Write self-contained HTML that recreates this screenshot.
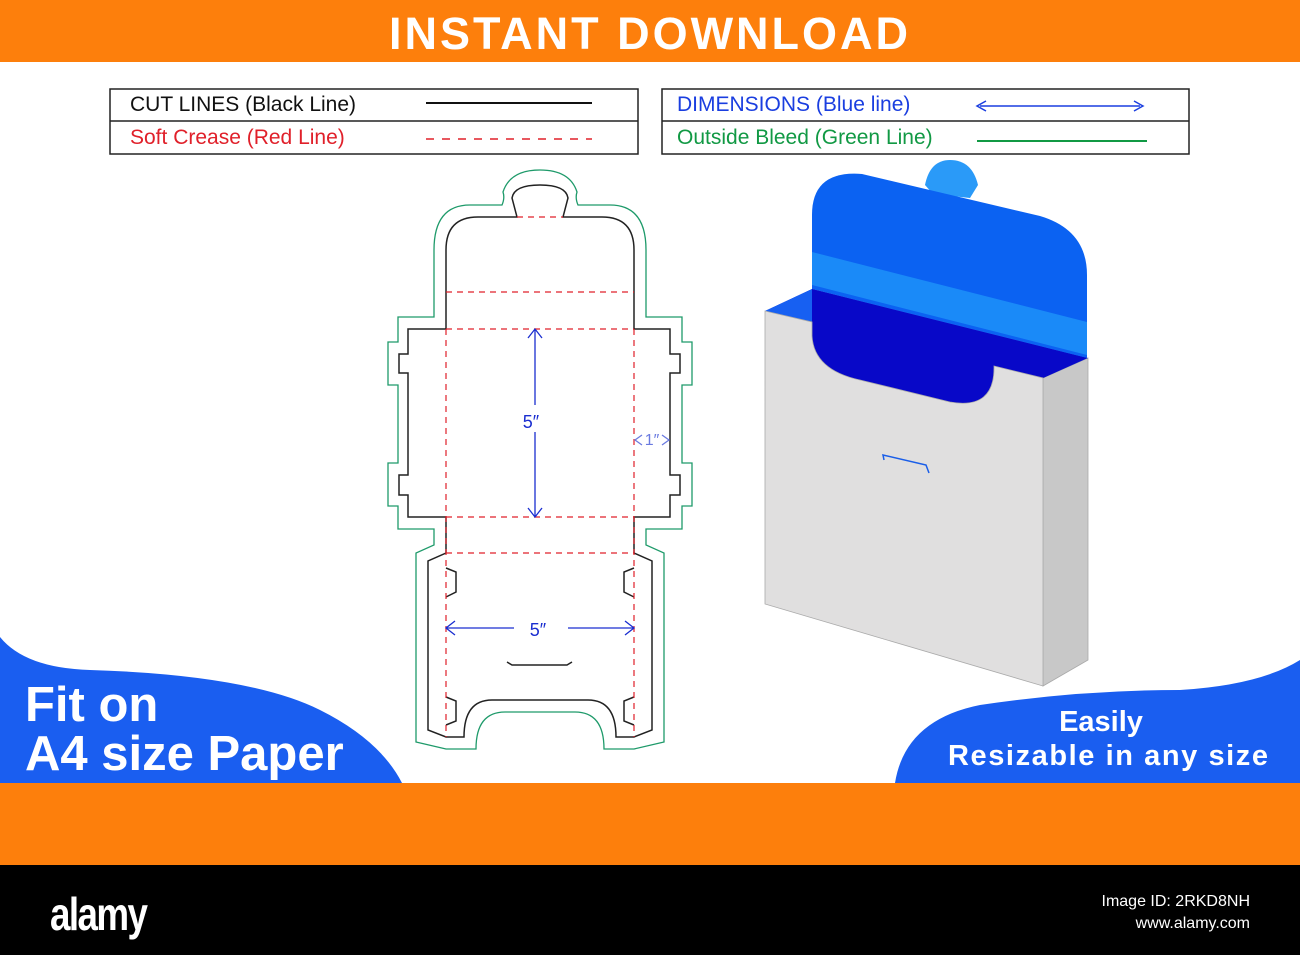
<!DOCTYPE html>
<html><head><meta charset="utf-8"><style>
html,body{margin:0;padding:0;width:1300px;height:955px;overflow:hidden;background:#fff}
svg{display:block}
text{font-family:"Liberation Sans",sans-serif}
</style></head><body>
<svg width="1300" height="955" viewBox="0 0 1300 955" xmlns="http://www.w3.org/2000/svg">
<rect width="1300" height="955" fill="#fff"/>
<rect x="0" y="0" width="1300" height="62" fill="#fd7f0c"/>
<text x="650" y="49" text-anchor="middle" font-size="45" font-weight="bold" fill="#fff" letter-spacing="3">INSTANT DOWNLOAD</text>
<g fill="none" stroke="#222" stroke-width="1.5">
<rect x="110" y="89" width="528" height="65"/><line x1="110" y1="121" x2="638" y2="121"/>
<rect x="662" y="89" width="527" height="65"/><line x1="662" y1="121" x2="1189" y2="121"/>
</g>
<text x="130" y="111" font-size="21" fill="#111">CUT LINES (Black Line)</text>
<line x1="426" y1="103" x2="592" y2="103" stroke="#111" stroke-width="2"/>
<text x="130" y="144" font-size="21" fill="#e0202a">Soft Crease (Red Line)</text>
<line x1="426" y1="139" x2="592" y2="139" stroke="#e0202a" stroke-width="1.5" stroke-dasharray="8,8"/>
<text x="677" y="111" font-size="21" fill="#1a3ee0">DIMENSIONS (Blue line)</text>
<line x1="980" y1="106" x2="1140" y2="106" stroke="#1a3ee0" stroke-width="1.5"/>
<path d="M986 101 L977 106 L986 111 M1134 101 L1143 106 L1134 111" fill="none" stroke="#1a3ee0" stroke-width="1.5"/>
<text x="677" y="144" font-size="21" fill="#119944">Outside Bleed (Green Line)</text>
<line x1="977" y1="141" x2="1147" y2="141" stroke="#119944" stroke-width="2"/>

<path d="M434 290 L434 250 Q434 205 470 205 L502 205 Q505 198 503 192 Q510 170 540 170 Q570 170 577 192 Q575 198 578 205 L610 205 Q646 205 646 250 L646 317 L682 317 L682 342 L692 342 L692 385 L682 385 L682 463 L692 463 L692 506 L682 506 L682 529 L646 529 L646 545 L664 553 L664 742 L634 749 L604 749 Q604 712 575 712 L505 712 Q476 712 476 749 L446 749 L416 742 L416 553 L434 545 L434 529 L398 529 L398 506 L388 506 L388 463 L398 463 L398 385 L388 385 L388 342 L398 342 L398 317 L434 317 Z" fill="none" stroke="#1e9a6a" stroke-width="1.3"/>
<path d="M446 329 L446 250 Q446 217 478 217 L517 217 L512 198 Q514 185 540 185 Q566 185 568 198 L563 217 L602 217 Q634 217 634 250 L634 329 L670 329 L670 354 L680 354 L680 373 L670 373 L670 475 L680 475 L680 495 L670 495 L670 517 L634 517 L634 553 L652 561 L652 730 L634 737 L616 737 Q616 700 588 700 L492 700 Q464 700 464 737 L446 737 L428 730 L428 561 L446 553 L446 517 L408 517 L408 495 L399 495 L399 475 L408 475 L408 373 L399 373 L399 354 L408 354 L408 329 Z" fill="none" stroke="#222" stroke-width="1.5"/>
<g fill="none" stroke="#222" stroke-width="1.5">
<path d="M446 568 L456 572 L456 592 L446 597"/>
<path d="M446 697 L456 701 L456 721 L446 725"/>
<path d="M634 568 L624 572 L624 592 L634 597"/>
<path d="M634 697 L624 701 L624 721 L634 725"/>
<path d="M507 662 L512 665 L567 665 L572 662"/>
</g>
<g fill="none" stroke="#e0202a" stroke-width="1.2" stroke-dasharray="6,5">
<line x1="517" y1="217" x2="563" y2="217"/>
<line x1="446" y1="292" x2="634" y2="292"/>
<line x1="446" y1="329" x2="634" y2="329"/>
<line x1="446" y1="517" x2="634" y2="517"/>
<line x1="446" y1="553" x2="634" y2="553"/>
<line x1="446" y1="329" x2="446" y2="737"/>
<line x1="634" y1="329" x2="634" y2="737"/>
</g>
<g fill="none" stroke="#1a2ed0" stroke-width="1.3">
<line x1="535" y1="329" x2="535" y2="405"/><line x1="535" y1="432" x2="535" y2="517"/>
<path d="M528 338 L535 329 L542 338 M528 508 L535 517 L542 508"/>
<line x1="446" y1="628" x2="514" y2="628"/><line x1="568" y1="628" x2="634" y2="628"/>
<path d="M455 621 L446 628 L455 635 M625 621 L634 628 L625 635"/>
<path d="M642 435 L635 440 L642 445 M662 435 L669 440 L662 445" stroke="#6a7ae0"/>
</g>
<text x="531" y="428" font-size="18" fill="#1a2ed0" text-anchor="middle">5″</text>
<text x="538" y="636" font-size="18" fill="#1a2ed0" text-anchor="middle">5″</text>
<text x="652" y="445" font-size="16" fill="#6a7ae0" text-anchor="middle">1″</text>

<path d="M1043 378 L1088 358 L1088 660 L1043 686 Z" fill="#c8c8c8" stroke="#aaa" stroke-width="0.8"/>
<path d="M765 311 L812 289 L1088 358 L1043 378 Z" fill="#0a1fd6"/>
<path d="M765 311 L812 289 L812 322 Z" fill="#1760f2"/>
<path d="M925 185 Q930 160 950 160 Q972 160 978 185 L970 198 L933 194 Z" fill="#2a9af8"/>
<path d="M812 215 Q812 170 862 174 L1040 216 Q1087 230 1087 275 L1087 358 L812 289 Z" fill="#0b62f2"/>
<path d="M812 252 L1087 322 L1087 355 L812 285 Z" fill="#1a8af8"/>
<path d="M812 289 L1087 358 L1043 378 L994 366 Q995 410 950 402 L860 380 Q814 370 812 336 Z" fill="#0808c8"/>
<path d="M765 311 L812 322 L812 336 Q814 370 860 380 L950 402 Q995 410 994 366 L1043 378 L1043 686 L765 604 Z" fill="#e0dfdf" stroke="#aaa" stroke-width="0.8"/>
<path d="M884 460 L883 455 L926 465 L929 473" fill="none" stroke="#1a5ee8" stroke-width="1.5"/>

<path d="M0 637 Q25 668 90 670 Q250 675 320 710 Q380 740 402 783 L0 783 Z" fill="#1a5ef0"/>
<path d="M895 783 Q905 720 980 705 Q1080 690 1180 690 Q1260 685 1300 660 L1300 783 Z" fill="#1a5ef0"/>
<text x="25" y="721" font-size="49" font-weight="bold" fill="#fff">Fit on</text>
<text x="25" y="770" font-size="49" font-weight="bold" fill="#fff">A4 size Paper</text>
<text x="1101" y="731" font-size="29" font-weight="bold" fill="#fff" text-anchor="middle">Easily</text>
<text x="1108" y="765" font-size="29" font-weight="bold" fill="#fff" text-anchor="middle" textLength="320">Resizable in any size</text>

<rect x="0" y="783" width="1300" height="82" fill="#fd7f0c"/>
<rect x="0" y="865" width="1300" height="90" fill="#000"/>
<text x="50" y="930" font-size="46" font-weight="bold" fill="#fff" letter-spacing="-2" transform="translate(50,0) scale(0.8,1) translate(-50,0)">alamy</text>
<text x="1250" y="906" font-size="16" fill="#fff" text-anchor="end">Image ID: 2RKD8NH</text>
<text x="1250" y="928" font-size="16" fill="#fff" text-anchor="end">www.alamy.com</text>
</svg>
</body></html>
